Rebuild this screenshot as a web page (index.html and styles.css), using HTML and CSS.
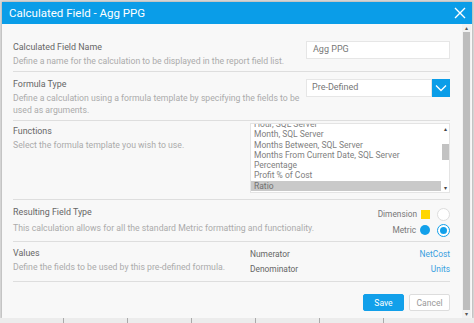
FILE: index.html
```html
<!DOCTYPE html>
<html lang="en">
<head>
    <meta charset="UTF-8">
    <title>Calculated Field - Agg PPG</title>
    <link rel="stylesheet" href="styles.css">
</head>
<body>
    <div class="dialog">
        <div class="dialog-header">
            <span class="dialog-title">Calculated Field - Agg PPG</span>
            <svg class="close" width="12" height="12" viewBox="0 0 12 12">
                <path d="M1 1 L11 11 M11 1 L1 11" stroke="#fff" stroke-width="1.4" fill="none"/>
            </svg>
        </div>
        <div class="dialog-body">
            <div class="content">
                <div class="row row-name">
                    <div class="info">
                        <div class="label">Calculated Field Name</div>
                        <div class="desc">Define a name for the calculation to be displayed in the report field list.</div>
                    </div>
                    <div class="control">
                        <div class="input">Agg PPG</div>
                    </div>
                </div>
                <div class="row row-formula">
                    <div class="info">
                        <div class="label">Formula Type</div>
                        <div class="desc">Define a calculation using a formula template by specifying the fields to be used as arguments.</div>
                    </div>
                    <div class="control">
                        <div class="select">
                            <div class="select-value">Pre-Defined</div>
                            <div class="select-btn">
                                <svg width="12" height="8" viewBox="0 0 12 8">
                                    <path d="M1 1.5 L6 6.5 L11 1.5" stroke="#fff" stroke-width="1.3" fill="none"/>
                                </svg>
                            </div>
                        </div>
                    </div>
                </div>
                <div class="row row-functions">
                    <div class="info">
                        <div class="label">Functions</div>
                        <div class="desc">Select the formula template you wish to use.</div>
                    </div>
                    <div class="control">
                        <div class="listbox">
                            <div class="list-items">
                                <div class="list-item cut">Hour, SQL Server</div>
                                <div class="list-item">Month, SQL Server</div>
                                <div class="list-item">Months Between, SQL Server</div>
                                <div class="list-item">Months From Current Date, SQL Server</div>
                                <div class="list-item">Percentage</div>
                                <div class="list-item">Profit % of Cost</div>
                                <div class="list-item selected">Ratio</div>
                            </div>
                            <div class="list-scroll">
                                <span class="arrow">&#9652;</span>
                                <div class="list-thumb"></div>
                                <span class="arrow">&#9662;</span>
                            </div>
                        </div>
                    </div>
                </div>
                <div class="row row-type">
                    <div class="info">
                        <div class="label">Resulting Field Type</div>
                        <div class="desc">This calculation allows for all the standard Metric formatting and functionality.</div>
                    </div>
                    <div class="control types">
                        <div class="type-option">
                            <span class="type-name">Dimension</span>
                            <span class="swatch square"></span>
                            <span class="radio"></span>
                        </div>
                        <div class="type-option">
                            <span class="type-name">Metric</span>
                            <span class="swatch dot"></span>
                            <span class="radio checked"></span>
                        </div>
                    </div>
                </div>
                <div class="row row-values">
                    <div class="info">
                        <div class="label">Values</div>
                        <div class="desc">Define the fields to be used by this pre-defined formula.</div>
                    </div>
                    <div class="control values">
                        <div class="value-row"><span>Numerator</span><a class="link">NetCost</a></div>
                        <div class="value-row"><span>Denominator</span><a class="link">Units</a></div>
                    </div>
                </div>
                <div class="footer">
                    <button class="btn btn-save">Save</button>
                    <button class="btn btn-cancel">Cancel</button>
                </div>
            </div>
            <div class="scrollbar">
                <span class="arrow">&#9652;</span>
                <div class="thumb"></div>
                <span class="arrow">&#9662;</span>
            </div>
        </div>
    </div>
    <div class="table-strip">
        <span></span><span></span><span></span><span></span><span></span><span></span>
    </div>
</body>
</html>
```

FILE: styles.css
```css
body {
    margin: 0;
    background-color: #d9d9d9;
    font-family: Roboto, "Noto Sans", sans-serif;
    width: 474px;
    height: 323px;
    overflow: hidden;
}
.dialog {
    margin: 2px 2px 0 2px;
    width: 470px;
    height: 316px;
    background-color: #f8f8f8;
    box-shadow: 0 0 2px rgba(0, 0, 0, 0.3);
    display: flex;
    flex-direction: column;
}
.dialog-header {
    height: 22px;
    background-color: #0a9de8;
    display: flex;
    align-items: center;
    justify-content: space-between;
    padding: 0 6px 0 7px;
}
.dialog-title {
    color: #fff;
    font-size: 11.5px;
}
.dialog-body {
    flex: 1;
    display: flex;
    min-width: 0;
}
.content {
    flex: 1;
    min-width: 0;
    padding: 12px 12px 0 11px;
}
.row {
    display: flex;
    justify-content: space-between;
    border-bottom: 1px solid #dedede;
}
.info {
    flex: 1;
    min-width: 0;
}
.label {
    font-size: 8.9px;
    line-height: 12px;
    color: #666;
}
.desc {
    font-size: 8.7px;
    line-height: 12px;
    color: #ababab;
    margin-top: 2px;
}
.control {
    flex-shrink: 0;
    display: flex;
    flex-direction: column;
    align-items: flex-end;
}
.row-name {
    height: 30px;
    padding-top: 5px;
}
.input {
    width: 136px;
    height: 16px;
    background-color: #fff;
    border: 1px solid #e6e6e6;
    font-size: 9px;
    color: #777;
    padding-left: 6px;
    line-height: 14px;
}
.row-formula {
    height: 42px;
    padding-top: 6px;
}
.row-formula .desc {
    max-width: 288px;
}
.select {
    display: flex;
    width: 144px;
    height: 18px;
    margin-top: 1px;
}
.select-value {
    flex: 1;
    background-color: #fff;
    border: 1px solid #e6e6e6;
    font-size: 9px;
    color: #777;
    padding-left: 5px;
    line-height: 14px;
}
.select-btn {
    width: 18px;
    background-color: #0a9de8;
    display: flex;
    align-items: center;
    justify-content: center;
}
.row-functions {
    height: 76px;
    padding-top: 2px;
}
.row-functions .info {
    padding-top: 2px;
}
.listbox {
    width: 200px;
    height: 70px;
    background-color: #fff;
    border: 1px solid #e4e4e4;
    box-sizing: border-box;
    display: flex;
}
.list-items {
    flex: 1;
    overflow: hidden;
}
.list-item {
    font-size: 8.5px;
    line-height: 10.3px;
    color: #808080;
    padding-left: 3px;
    white-space: nowrap;
}
.list-item.cut {
    margin-top: -5px;
}
.list-item.selected {
    background-color: #c9c9c9;
    color: #707070;
}
.list-scroll {
    width: 8px;
    display: flex;
    flex-direction: column;
    align-items: center;
    background-color: #fff;
}
.list-scroll .arrow {
    font-size: 6px;
    line-height: 9px;
    color: #444;
}
.list-thumb {
    width: 7px;
    height: 16px;
    margin-top: 11px;
    margin-bottom: auto;
    background-color: #c2c2c2;
}
.row-type {
    height: 35px;
    padding-top: 6px;
}
.row-type .desc {
    margin-top: 4px;
}
.types {
    gap: 2px;
    padding-top: 1px;
}
.type-option {
    display: flex;
    align-items: center;
    height: 14px;
}
.type-name {
    font-size: 8.3px;
    color: #777;
    margin-right: 4px;
}
.swatch {
    width: 9px;
    height: 9px;
    margin-right: 7px;
}
.swatch.square {
    background-color: #ffd600;
}
.swatch.dot {
    width: 10px;
    height: 10px;
    border-radius: 50%;
    background-color: #12a0ea;
}
.radio {
    width: 11px;
    height: 11px;
    border-radius: 50%;
    border: 1px solid #ddd;
    background-color: #fff;
    position: relative;
}
.radio.checked {
    border: 1px solid #12a0ea;
}
.radio.checked::after {
    content: "";
    position: absolute;
    left: 2px;
    top: 2px;
    width: 7px;
    height: 7px;
    border-radius: 50%;
    background-color: #12a0ea;
}
.row-values {
    height: 34px;
    padding-top: 5px;
}
.values {
    gap: 3px;
    padding-top: 1px;
}
.value-row {
    width: 200px;
    display: flex;
    justify-content: space-between;
    font-size: 8.4px;
    line-height: 12px;
    color: #666;
}
.link {
    color: #3a9fe0;
}
.footer {
    display: flex;
    justify-content: flex-end;
    gap: 5px;
    padding-top: 12px;
}
.btn {
    width: 41px;
    height: 17px;
    font-family: Roboto, "Noto Sans", sans-serif;
    font-size: 8.6px;
    border-radius: 2px;
    padding: 0;
}
.btn-save {
    background-color: #12a0ea;
    border: 1px solid #12a0ea;
    color: #fff;
}
.btn-cancel {
    background-color: #fff;
    border: 1px solid #ddd;
    color: #999;
}
.scrollbar {
    width: 9px;
    margin-right: 1px;
    display: flex;
    flex-direction: column;
    align-items: center;
    background-color: #f2f2f2;
}
.scrollbar .arrow {
    font-size: 6px;
    line-height: 8px;
    color: #555;
}
.thumb {
    flex: 1;
    width: 7px;
    background-color: #bdbdbd;
}
.table-strip {
    display: flex;
    height: 5px;
    background-color: #ececec;
}
.table-strip span {
    width: 63px;
    border-right: 1px solid #aaa;
}
```
